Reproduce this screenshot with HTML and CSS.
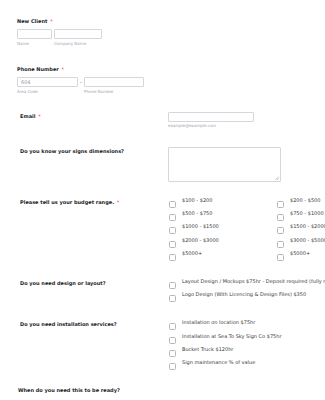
FILE: index.html
```html
<!doctype html>
<html lang="en">
<head>
    <meta charset="UTF-8">
    <title>Sign Quote Form</title>
    <link rel="stylesheet" href="styles.css">
</head>
<body>
    <div id="form">
        <div class="q top q1">
            <div class="lbl">New Client <span class="req">*</span></div>
            <div class="line">
                <div class="sub"><input class="inp w-name" type="text"><span>Name</span></div>
                <div class="sub"><input class="inp w-company" type="text"><span>Company Name</span></div>
            </div>
        </div>
        <div class="q top q2">
            <div class="lbl">Phone Number <span class="req">*</span></div>
            <div class="line">
                <div class="sub"><input class="inp w-area" type="text" value="604"><span>Area Code</span></div>
                <div class="dash">-</div>
                <div class="sub"><input class="inp w-phone" type="text"><span>Phone Number</span></div>
            </div>
        </div>
        <div class="q side q3">
            <div class="lbl">Email <span class="req">*</span></div>
            <div class="sub"><input class="inp w-email" type="text"><span>example@example.com</span></div>
        </div>
        <div class="q side q4">
            <div class="lbl">Do you know your signs dimensions?</div>
            <div class="area">
                <svg class="grip" width="4" height="4" viewBox="0 0 4 4"><path d="M0.5 3.8L3.8 0.5M2 3.8L3.8 2" stroke="#9a9ea8" stroke-width="0.6" fill="none"/></svg>
            </div>
        </div>
        <div class="q side q5">
            <div class="lbl">Please tell us your budget range. <span class="req">*</span></div>
            <div class="opts two">
                <label class="opt"><span class="box"></span>$100 - $200</label>
                <label class="opt"><span class="box"></span>$200 - $500</label>
                <label class="opt"><span class="box"></span>$500 - $750</label>
                <label class="opt"><span class="box"></span>$750 - $1000</label>
                <label class="opt"><span class="box"></span>$1000 - $1500</label>
                <label class="opt"><span class="box"></span>$1500 - $2000</label>
                <label class="opt"><span class="box"></span>$2000 - $3000</label>
                <label class="opt"><span class="box"></span>$3000 - $5000</label>
                <label class="opt"><span class="box"></span>$5000+</label>
                <label class="opt"><span class="box"></span>$5000+</label>
            </div>
        </div>
        <div class="q side q6">
            <div class="lbl">Do you need design or layout?</div>
            <div class="opts">
                <label class="opt"><span class="box"></span>Layout Design / Mockups $75hr - Deposit required (fully refundable)</label>
                <label class="opt"><span class="box"></span>Logo Design (With Licencing &amp; Design Files) $350</label>
            </div>
        </div>
        <div class="q side q7">
            <div class="lbl">Do you need installation services?</div>
            <div class="opts">
                <label class="opt"><span class="box"></span>Installation on location $75hr</label>
                <label class="opt"><span class="box"></span>Installation at Sea To Sky Sign Co $75hr</label>
                <label class="opt"><span class="box"></span>Bucket Truck $120hr</label>
                <label class="opt"><span class="box"></span>Sign maintenance % of value</label>
            </div>
        </div>
        <div class="q top q8">
            <div class="lbl">When do you need this to be ready?</div>
        </div>
    </div>
</body>
</html>
```
FILE: styles.css
```css
*{
    margin:0;
    padding:0;
    box-sizing:border-box;
}
html,body{
    width:325px;
    height:400px;
    overflow:hidden;
    background:#fff;
}
body{
    font-family:"DejaVu Sans",Verdana,sans-serif;
    color:#1d1d1f;
}
#form{
    width:600px;
    padding-top:18px;
}
.q{
    margin-bottom:15px;
}
.lbl{
    font-size:5px;
    font-weight:bold;
    line-height:7px;
    white-space:nowrap;
}
.req{
    color:#f23a3c;
    font-weight:normal;
    margin-left:1px;
}
.top{
    padding-left:17px;
}
.top .lbl{
    margin-bottom:4px;
}
.q1{
    margin-bottom:20px;
}
.q2{
    margin-bottom:18px;
}
.q3{
    margin-bottom:19px;
}
.side{
    display:flex;
    padding-left:20px;
}
.side .lbl{
    width:148px;
    padding-top:1px;
}
.q5 .lbl,.q6 .lbl,.q7 .lbl{
    padding-top:2px;
}
.line{
    display:flex;
    gap:2px;
}
.sub{
    display:flex;
    flex-direction:column;
}
.sub span{
    font-size:4px;
    line-height:5px;
    margin-top:2px;
    color:#a3a6ad;
    white-space:nowrap;
}
.inp{
    height:10px;
    border:1px solid #d5d7dc;
    border-radius:1px;
    font-family:"DejaVu Sans",sans-serif;
    font-size:5px;
    color:#94979e;
    padding:0 3px;
    outline:none;
    background:#fff;
}
.w-name{ width:35px; }
.w-company{ width:48px; }
.w-area{ width:61px; }
.w-phone{ width:60px; }
.w-email{ width:86px; }
.dash{
    font-size:5px;
    line-height:10px;
    width:4px;
    text-align:center;
    color:#555;
}
.q2 .line{
    gap:1px;
}
.q3 .sub span{
    margin-top:1px;
}
.area{
    position:relative;
    width:113px;
    height:35px;
    border:1px solid #d5d7dc;
    border-radius:1px;
}
.grip{
    position:absolute;
    right:1px;
    bottom:1px;
}
.opts{
    padding-left:1px;
}
.opts.two{
    display:grid;
    grid-template-columns:108px 108px;
}
.opt{
    display:flex;
    align-items:flex-start;
    font-size:5px;
    line-height:7px;
    height:13.2px;
    white-space:nowrap;
    color:#3b3b3e;
}
.box{
    flex:none;
    width:7px;
    height:7px;
    margin-top:4px;
    margin-right:6px;
    border:1px solid #b3b6bd;
    border-radius:1.5px;
    background:#fff;
}
.q8{
    padding-left:18px;
}
```
